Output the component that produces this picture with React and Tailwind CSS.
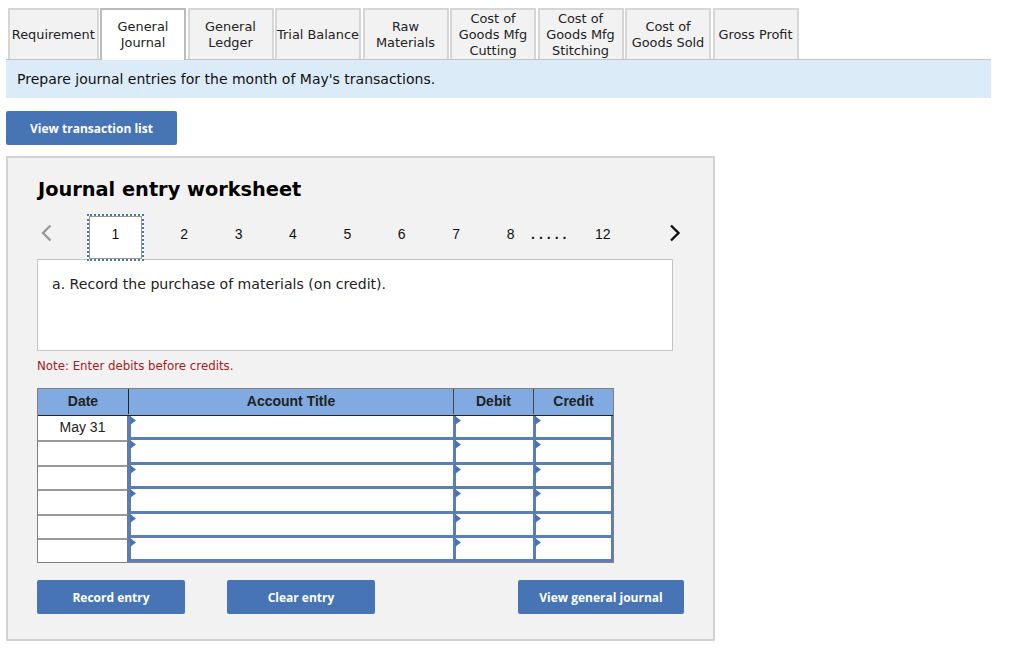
const verdana = 'font-["DejaVu_Sans",sans-serif]';

const tabs = [
  { label: ['Requirement'], w: 'w-[90.5px]' },
  { label: ['General', 'Journal'], w: 'w-[86px]', active: true },
  { label: ['General', 'Ledger'], w: 'w-[86px]' },
  { label: ['Trial Balance'], w: 'w-[86px]' },
  { label: ['Raw', 'Materials'], w: 'w-[86px]' },
  { label: ['Cost of', 'Goods Mfg', 'Cutting'], w: 'w-[86px]' },
  { label: ['Cost of', 'Goods Mfg', 'Stitching'], w: 'w-[86px]' },
  { label: ['Cost of', 'Goods Sold'], w: 'w-[86px]' },
  { label: ['Gross Profit'], w: 'w-[86px]' },
];

const pages = ['2', '3', '4', '5', '6', '7', '8'];
const rows = ['May 31', '', '', '', '', ''];

function Tab({ tab }) {
  return (
    <div
      className={`${tab.w} flex flex-col items-center justify-center border-2 border-b-0 text-[12.9px] leading-[16px] text-[#222] whitespace-nowrap ${
        tab.active ? 'h-[52px] -mb-px relative z-10 bg-white border-[#bbb]' : 'h-[51px] bg-[#f2f2f2] border-[#d6d6d6]'
      }`}
    >
      {tab.label.map((line) => (
        <span key={line}>{line}</span>
      ))}
    </div>
  );
}

function Btn({ children, className }) {
  return (
    <button className={`h-[34px] rounded-[2px] bg-[#4674b5] text-white text-[12px] font-bold font-["Open_Sans",sans-serif] ${className}`}>
      {children}
    </button>
  );
}

function EntryCell({ width, last }) {
  return (
    <div className={`${width} relative h-full bg-white border-l-[3px] border-b-[3px] border-[#5a7fb5] ${last ? 'border-r-2' : ''}`}>
      <svg className="absolute -left-[1px] top-0" width="6" height="9" viewBox="0 0 6 9">
        <path d="M0 0 L6 4.5 L0 9 Z" fill="#4674b5" />
      </svg>
    </div>
  );
}

export default function App() {
  return (
    <div className={`w-[1024px] h-[659px] bg-white overflow-hidden pt-2 ${verdana}`}>
      <div className="flex gap-[1.5px] pl-[8px]">
        {tabs.map((t) => (
          <Tab key={t.label.join()} tab={t} />
        ))}
      </div>

      <div className="ml-[6px] w-[985px] h-[39px] border-t border-[#c4c4c4] bg-[#dcebf8] pl-[11px] flex items-center text-[14px] text-[#111]">
        Prepare journal entries for the month of May's transactions.
      </div>

      <Btn className="block ml-[6px] mt-[13px] w-[171px] pt-[1px]">View transaction list</Btn>

      <div className="ml-[6px] mt-[11px] w-[709px] h-[485px] bg-[#f2f2f2] border-2 border-[#d2d2d2] pl-[29px] pt-[19px]">
        <h1 className="text-[19.35px] leading-6 font-bold text-black mt-[1px] ml-[1px]">Journal entry worksheet</h1>

        <div className="flex items-start mt-[12px] h-[47px] relative z-10 text-[14px] text-[#111] font-['Liberation_Sans',sans-serif]">
          <div className="w-[51px] h-[38px] -ml-[1px] flex items-center">
            <svg className="ml-[4px]" width="12" height="18" viewBox="0 0 12 18" fill="none">
              <path d="M10.5 1.5 L3 9 L10.5 16.5" stroke="#999" strokeWidth="2.4" />
            </svg>
          </div>
          <div className="w-[57px] h-[47px] pb-[6px] bg-white border-2 border-dotted border-[#4674b5] shadow-[inset_0_0_0_1px_#999] flex items-center justify-center">1</div>
          <div className="flex ml-[13px]">
            {pages.map((p) => (
              <div key={p} className="w-[54.4px] h-[41px] flex items-center justify-center">{p}</div>
            ))}
          </div>
          <div className="w-[44px] h-[41px] -ml-[9px] flex items-center justify-center font-bold tracking-[4px]">.....</div>
          <div className="w-[54px] h-[41px] ml-[3px] flex items-center justify-center">12</div>
          <div className="ml-[39px] h-[38px] flex items-center">
            <svg width="12" height="18" viewBox="0 0 12 18" fill="none">
              <path d="M2 1.5 L9.5 9 L2 16.5" stroke="#111" strokeWidth="2.4" />
            </svg>
          </div>
        </div>

        <div className="w-[636px] h-[92px] -mt-[2px] bg-white border border-[#c4c4c4] pl-[14px] pt-[14px] text-[14.1px] leading-[20px] text-[#222]">
          a. Record the purchase of materials (on credit).
        </div>

        <p className="mt-[7px] text-[11.8px] leading-[16px] text-[#a3201d]">Note: Enter debits before credits.</p>

        <div className="mt-[14px] w-[577px] border border-[#808080] font-['Liberation_Sans',sans-serif] text-[14px] text-[#222]">
          <div className="flex h-[27px] pb-[1px] bg-[#80aae0] border-b border-[#222] font-bold">
            <div className="w-[91px] flex items-center justify-center border-r border-[#222]">Date</div>
            <div className="w-[325px] flex items-center justify-center border-r border-[#444]">Account Title</div>
            <div className="w-[80px] flex items-center justify-center border-r border-[#444]">Debit</div>
            <div className="flex-1 flex items-center justify-center">Credit</div>
          </div>
          {rows.map((date, i) => (
            <div key={i} className="flex h-[24.4px]">
              <div className={`w-[90px] pb-[2px] bg-white flex items-center justify-center border-r border-[#777] ${i ? 'border-t-2 border-t-[#999]' : ''}`}>{date}</div>
              <EntryCell width="w-[325px]" />
              <EntryCell width="w-[80px]" />
              <EntryCell width="flex-1" last />
            </div>
          ))}
        </div>

        <div className="flex mt-[17px]">
          <Btn className="w-[148px] pt-[2px]">Record entry</Btn>
          <Btn className="w-[148px] ml-[42px] pt-[2px]">Clear entry</Btn>
          <Btn className="w-[166px] ml-[143px] pt-[2px]">View general journal</Btn>
        </div>
      </div>
    </div>
  );
}
